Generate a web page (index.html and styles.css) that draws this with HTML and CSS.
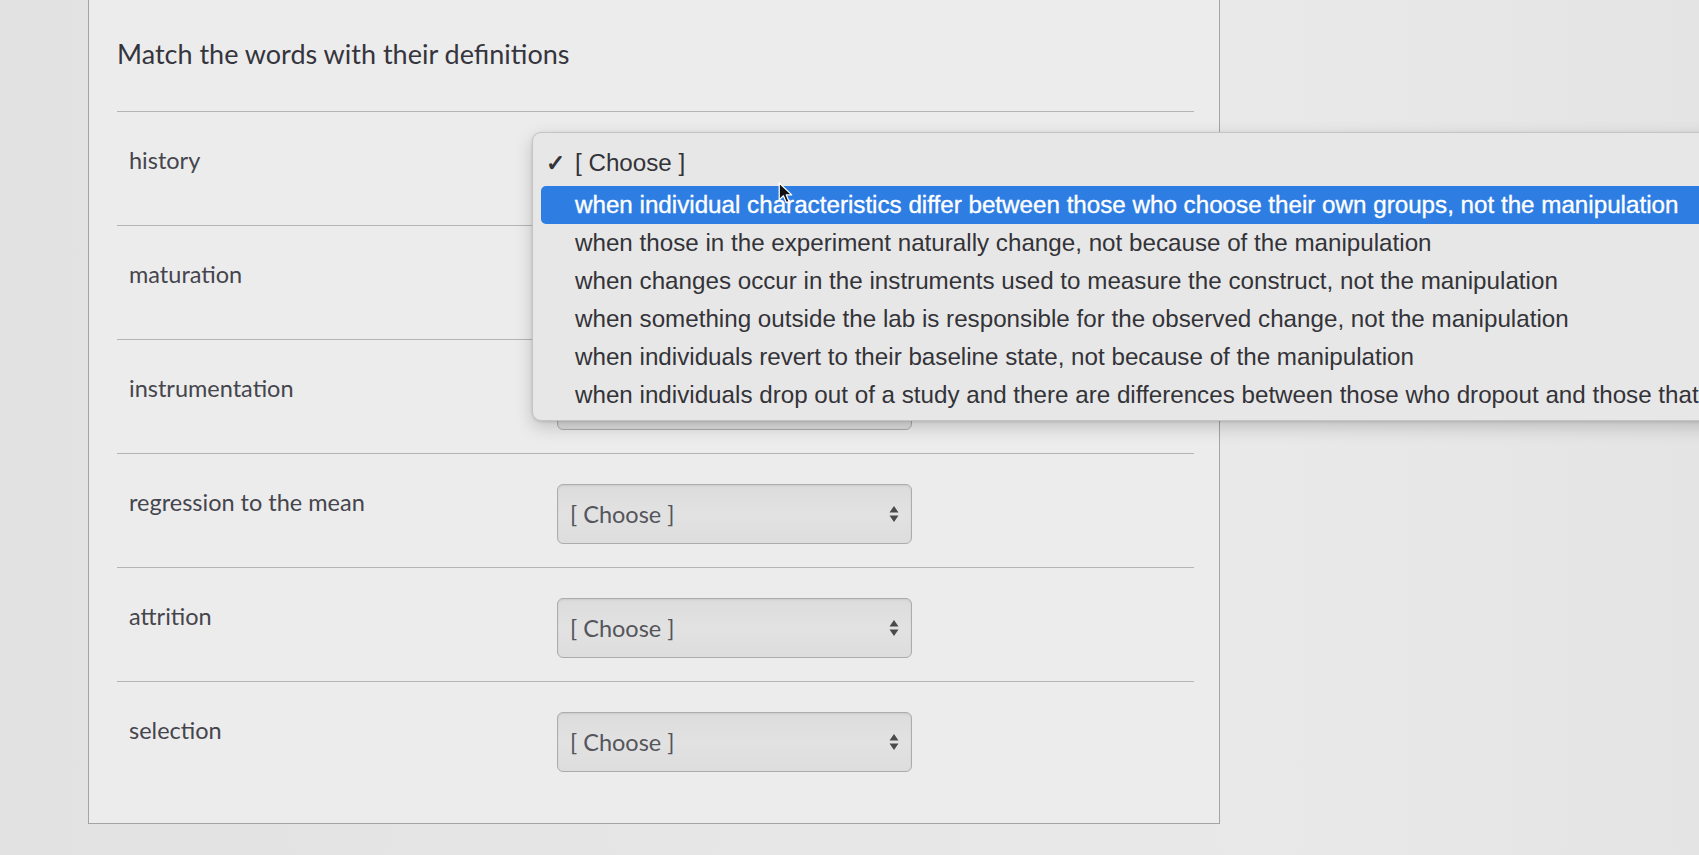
FILE: index.html
```html
<!DOCTYPE html>
<html lang="en">
<head>
<meta charset="utf-8">
<title>Match the words with their definitions</title>
<link rel="stylesheet" href="styles.css">
</head>
<body>
<div class="page">
  <div class="card">
    <h1 class="title">Match the words with their definitions</h1>
    <div class="rows">
      <div class="row"><div class="label">history</div><div class="select"><span>[ Choose ]</span><svg class="arrows" viewBox="0 0 10 18" width="10" height="18"><path d="M5 1 L9.5 7.5 H0.5 Z M5 17 L9.5 10.5 H0.5 Z" fill="#4a4a4a"/></svg></div></div>
      <div class="row"><div class="label">maturation</div><div class="select"><span>[ Choose ]</span><svg class="arrows" viewBox="0 0 10 18" width="10" height="18"><path d="M5 1 L9.5 7.5 H0.5 Z M5 17 L9.5 10.5 H0.5 Z" fill="#4a4a4a"/></svg></div></div>
      <div class="row"><div class="label">instrumentation</div><div class="select"><span>[ Choose ]</span><svg class="arrows" viewBox="0 0 10 18" width="10" height="18"><path d="M5 1 L9.5 7.5 H0.5 Z M5 17 L9.5 10.5 H0.5 Z" fill="#4a4a4a"/></svg></div></div>
      <div class="row"><div class="label">regression to the mean</div><div class="select"><span>[ Choose ]</span><svg class="arrows" viewBox="0 0 10 18" width="10" height="18"><path d="M5 1 L9.5 7.5 H0.5 Z M5 17 L9.5 10.5 H0.5 Z" fill="#4a4a4a"/></svg></div></div>
      <div class="row"><div class="label">attrition</div><div class="select"><span>[ Choose ]</span><svg class="arrows" viewBox="0 0 10 18" width="10" height="18"><path d="M5 1 L9.5 7.5 H0.5 Z M5 17 L9.5 10.5 H0.5 Z" fill="#4a4a4a"/></svg></div></div>
      <div class="row"><div class="label">selection</div><div class="select"><span>[ Choose ]</span><svg class="arrows" viewBox="0 0 10 18" width="10" height="18"><path d="M5 1 L9.5 7.5 H0.5 Z M5 17 L9.5 10.5 H0.5 Z" fill="#4a4a4a"/></svg></div></div>
    </div>
  </div>

  <div class="menu">
    <div class="opt checked"><span class="check">✓</span>[ Choose ]</div>
    <div class="opt active">when individual characteristics differ between those who choose their own groups, not the manipulation</div>
    <div class="opt">when those in the experiment naturally change, not because of the manipulation</div>
    <div class="opt">when changes occur in the instruments used to measure the construct, not the manipulation</div>
    <div class="opt">when something outside the lab is responsible for the observed change, not the manipulation</div>
    <div class="opt">when individuals revert to their baseline state, not because of the manipulation</div>
    <div class="opt">when individuals drop out of a study and there are differences between those who dropout and those that complete it</div>
  </div>

  <svg class="cursor" viewBox="0 0 14 22" width="15" height="23"><path d="M1 1 L1 17 L5 13.2 L7.8 19.8 L10.4 18.7 L7.7 12.3 L13 12.3 Z" fill="#111" stroke="#fff" stroke-width="1.2" stroke-linejoin="round"/></svg>
</div>
</body>
</html>
```

FILE: styles.css
```css
html, body {
  margin: 0;
  padding: 0;
}
body {
  width: 1699px;
  height: 855px;
  overflow: hidden;
  background: linear-gradient(90deg, #e2e2e2 0%, #e6e6e6 40%, #e9e9e9 75%, #e4e4e4 100%);
  font-family: Lato, "Liberation Sans", sans-serif;
}
.page {
  position: relative;
  width: 1699px;
  height: 855px;
}
.card {
  margin-left: 88px;
  width: 1132px;
  box-sizing: border-box;
  background: #ececec;
  border: 1px solid #a4a4a4;
  border-top: none;
  padding: 0 25px 28px 28px;
}
.title {
  margin: 0;
  padding: 38px 0 42px 0;
  font-size: 27px;
  line-height: 31px;
  font-weight: 400;
  color: #35353d;
}
.row {
  display: grid;
  grid-template-columns: 440px 355px;
  border-top: 1px solid #b4b4b4;
  padding-bottom: 23px;
}
.label {
  padding: 35px 0 0 12px;
  font-size: 23.5px;
  line-height: 26px;
  color: #45454d;
}
.select {
  margin-top: 30px;
  height: 60px;
  box-sizing: border-box;
  border: 1px solid #acacac;
  border-radius: 6px;
  background: linear-gradient(180deg, #dcdcdc 0%, #e2e2e2 50%, #dddddd 100%);
  box-shadow: inset 0 1px 2px rgba(0,0,0,0.08);
  display: flex;
  align-items: center;
  justify-content: space-between;
  padding: 0 12px 0 12px;
  font-size: 23.5px;
  color: #55555c;
}
.arrows {
  display: block;
}
.menu {
  position: absolute;
  left: 532px;
  top: 132px;
  width: 1300px;
  box-sizing: border-box;
  padding: 10px 8px 6px 8px;
  background: #e7e7e7;
  border: 1px solid #c4c4c4;
  border-radius: 9px;
  box-shadow: 0 6px 18px rgba(0,0,0,0.18), 0 1px 3px rgba(0,0,0,0.12);
  font-family: "Liberation Sans", Arial, sans-serif;
  font-size: 24.2px;
  color: #333338;
}
.opt {
  height: 38px;
  line-height: 38px;
  padding-left: 34px;
  white-space: nowrap;
  border-radius: 5px;
  position: relative;
}
.opt.checked {
  height: 43px;
  line-height: 40px;
}
.check {
  position: absolute;
  left: 5px;
  top: 0;
  font-size: 23px;
  font-weight: 700;
}
.opt.active {
  background: #2e7de3;
  color: #ffffff;
  -webkit-text-stroke: 0.35px #ffffff;
}
.cursor {
  position: absolute;
  left: 778px;
  top: 182px;
}
```
